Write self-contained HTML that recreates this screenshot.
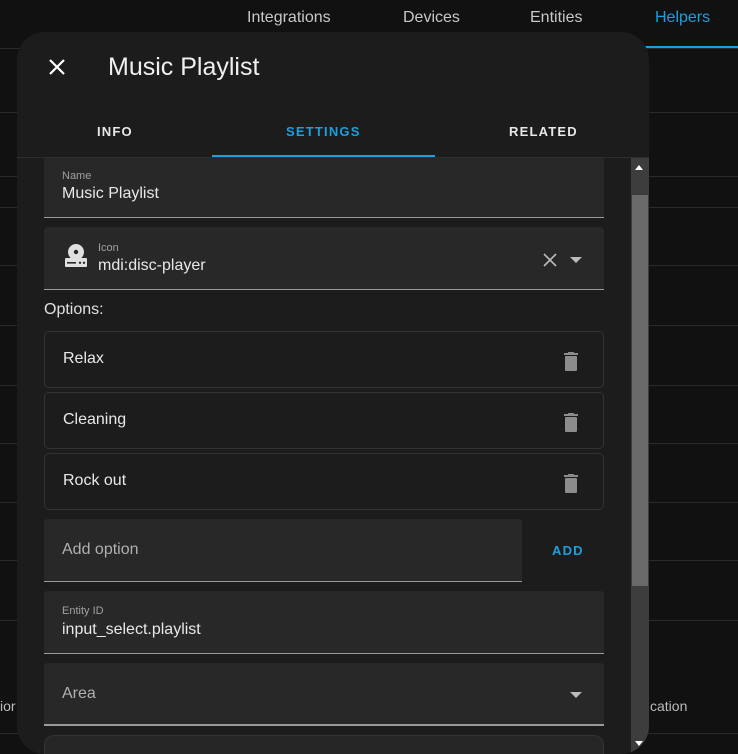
<!DOCTYPE html>
<html><head><style>
*{box-sizing:border-box;margin:0;padding:0}
body{width:738px;height:750px;overflow:hidden;background:#111;font-family:"Liberation Sans",sans-serif;position:relative;color:#e1e1e1}
.ab{position:absolute}
.hl{position:absolute;left:0;width:738px;height:1px;background:#2a2a2a}
.top{font-size:16px;color:#c8c8c8;top:9px}
.dlg{position:absolute;left:17px;top:32px;width:632px;height:722px;background:#1c1c1c;border-radius:28px;overflow:hidden}
.field{position:absolute;left:27px;width:560px;background:#282828;border-radius:4px 4px 0 0;border-bottom:1px solid #9a9a9a}
.lab{position:absolute;left:18px;font-size:11px;color:#a0a0a0}
.val{position:absolute;left:18px;font-size:16px;color:#e8e8e8}
.opt{position:absolute;left:27px;width:560px;height:57px;border:1px solid #333;border-radius:5px;background:#1c1c1c}
.opt span{position:absolute;left:18px;top:18px;font-size:16px;color:#e8e8e8}
.tr{position:absolute;right:24px;top:20px}
.tab{position:absolute;top:92px;font-size:13px;font-weight:bold;letter-spacing:1.2px}
</style></head><body>
<div class="hl" style="top:48px"></div>
<div class="hl" style="top:112px"></div>
<div class="hl" style="top:176px"></div>
<div class="hl" style="top:207px"></div>
<div class="hl" style="top:265px"></div>
<div class="hl" style="top:325px"></div>
<div class="hl" style="top:385px"></div>
<div class="hl" style="top:443px"></div>
<div class="hl" style="top:502px"></div>
<div class="hl" style="top:560px"></div>
<div class="hl" style="top:620px"></div>
<div class="hl" style="top:733px"></div>
<div class="ab top" style="left:247px">Integrations</div>
<div class="ab top" style="left:403px">Devices</div>
<div class="ab top" style="left:530px">Entities</div>
<div class="ab top" style="left:655px;color:#1a9fe0">Helpers</div>
<div class="ab" style="left:645px;top:46px;width:93px;height:2px;background:#1a9fe0"></div>
<div class="ab" style="left:0;top:698px;font-size:14px;color:#bbb">ior</div>
<div class="ab" style="left:650px;top:698px;font-size:14px;color:#bbb">cation</div>

<div class="dlg">
 <svg class="ab" style="left:31px;top:26px" width="18" height="18" viewBox="0 0 18 18"><path d="M2 2L16 16M16 2L2 16" stroke="#fff" stroke-width="2.2"/></svg>
 <div class="ab" style="left:91px;top:21px;font-size:25px;color:#f0f0f0">Music Playlist</div>
 <div class="tab" style="left:80px;color:#e8e8e8">INFO</div>
 <div class="tab" style="left:269px;color:#1a9fe0">SETTINGS</div>
 <div class="tab" style="left:492px;color:#e8e8e8">RELATED</div>
 <div class="ab" style="left:195px;top:123px;width:223px;height:2px;background:#1a9fe0"></div>
 <div class="ab" style="left:0;top:125px;width:632px;height:1px;background:#2e2e2e"></div>

 <div class="field" style="top:126px;height:60px;border-radius:0"><div class="lab" style="top:12px">Name</div><div class="val" style="top:27px">Music Playlist</div></div>
 <div class="field" style="top:195px;height:63px">
  <svg class="ab" style="left:20px;top:16px" width="24" height="26" viewBox="0 0 24 26"><circle cx="12" cy="9" r="8" fill="#e0e0e0"/><circle cx="12" cy="9" r="2.2" fill="#282828"/><rect x="1" y="15" width="22" height="9" rx="1" fill="#e0e0e0"/><rect x="3" y="19" width="9" height="1.6" fill="#282828"/><circle cx="16" cy="19.8" r="1.2" fill="#282828"/><circle cx="20" cy="19.8" r="1.2" fill="#282828"/></svg>
  <div class="lab" style="left:54px;top:15px">Icon</div><div class="val" style="left:54px;top:30px">mdi:disc-player</div>
  <svg class="ab" style="left:499px;top:26px" width="14" height="14" viewBox="0 0 14 14"><path d="M1 1L13 13M13 1L1 13" stroke="#bbb" stroke-width="1.6"/></svg>
  <svg class="ab" style="left:526px;top:30px" width="12" height="6"><path d="M0 0H12L6 6Z" fill="#bbb"/></svg>
 </div>
 <div class="ab" style="left:27px;top:269px;font-size:16px;color:#e0e0e0">Options:</div>
 <div class="opt" style="top:299px"><span>Relax</span><svg class="tr" width="16" height="19" viewBox="0 0 16 19"><rect x="1" y="1" width="14" height="2" fill="#8c8c8c"/><rect x="5" y="0" width="6" height="2" fill="#8c8c8c"/><rect x="2" y="4" width="12" height="15" rx="1" fill="#8c8c8c"/></svg></div>
 <div class="opt" style="top:360px"><span>Cleaning</span><svg class="tr" width="16" height="19" viewBox="0 0 16 19"><rect x="1" y="1" width="14" height="2" fill="#8c8c8c"/><rect x="5" y="0" width="6" height="2" fill="#8c8c8c"/><rect x="2" y="4" width="12" height="15" rx="1" fill="#8c8c8c"/></svg></div>
 <div class="opt" style="top:421px"><span>Rock out</span><svg class="tr" width="16" height="19" viewBox="0 0 16 19"><rect x="1" y="1" width="14" height="2" fill="#8c8c8c"/><rect x="5" y="0" width="6" height="2" fill="#8c8c8c"/><rect x="2" y="4" width="12" height="15" rx="1" fill="#8c8c8c"/></svg></div>
 <div class="field" style="top:487px;width:478px;height:63px"><div class="val" style="top:22px;color:#b0b0b0">Add option</div></div>
 <div class="ab" style="left:535px;top:511px;font-size:13px;font-weight:bold;color:#1a9fe0;letter-spacing:1.2px">ADD</div>
 <div class="field" style="top:559px;height:63px"><div class="lab" style="top:14px">Entity ID</div><div class="val" style="top:30px">input_select.playlist</div></div>
 <div class="field" style="top:631px;height:63px;border-bottom:2px solid #9a9a9a"><div class="val" style="top:22px;color:#b0b0b0">Area</div><svg class="ab" style="left:526px;top:29px" width="12" height="6"><path d="M0 0H12L6 6Z" fill="#bbb"/></svg></div>
 <div class="ab" style="left:27px;top:703px;width:560px;height:40px;background:#262626;border:1px solid #333;border-radius:10px"></div>

 <div class="ab" style="left:614px;top:126px;width:18px;height:600px;background:#3d3d3d"></div>
 <div class="ab" style="left:615px;top:163px;width:16px;height:391px;background:#6a6a6a"></div>
 <svg class="ab" style="left:618px;top:133px" width="8" height="5"><path d="M0 5H8L4 0Z" fill="#fff"/></svg>
 <svg class="ab" style="left:618px;top:709px" width="8" height="5"><path d="M0 0H8L4 5Z" fill="#fff"/></svg>
</div>
</body></html>
